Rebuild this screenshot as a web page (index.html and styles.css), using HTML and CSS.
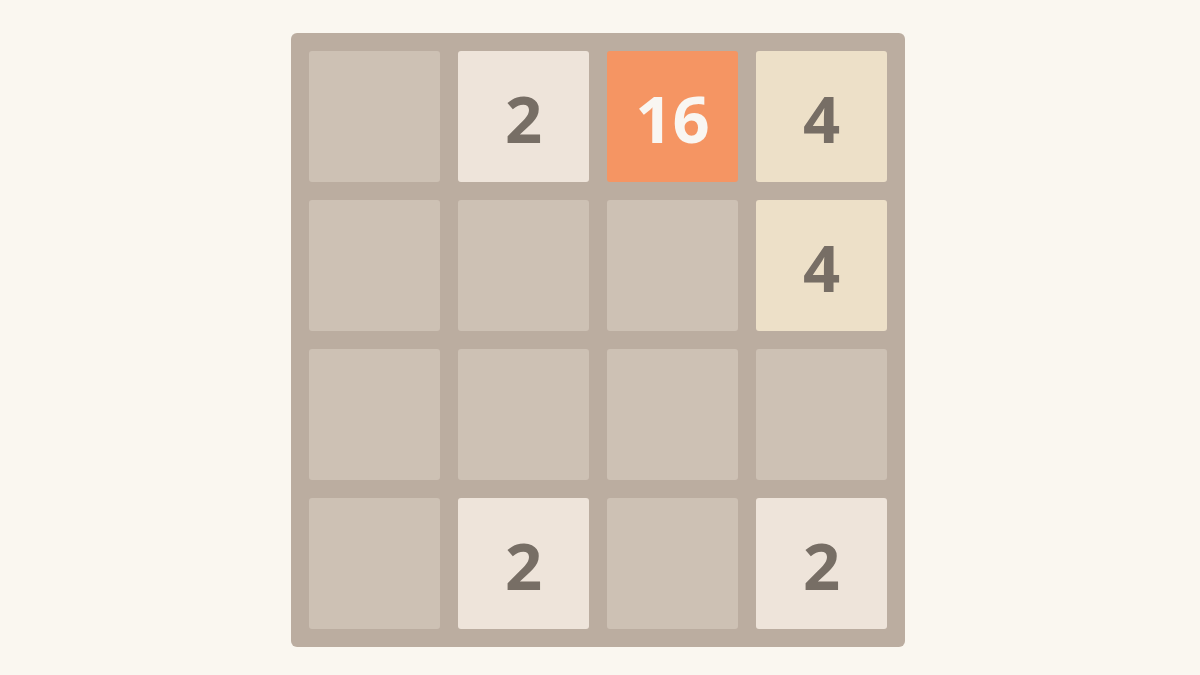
FILE: index.html
```html
<!DOCTYPE html>
<html lang="en">
<head>
    <meta charset="UTF-8">
    <meta name="viewport" content="width=device-width, initial-scale=1.0">
    <title>2048</title>
    <link rel="stylesheet" href="styles.css">
</head>
<body>
    <div class="board">
        <div class="tile"></div>
        <div class="tile tile-2">2</div>
        <div class="tile tile-16">16</div>
        <div class="tile tile-4">4</div>

        <div class="tile"></div>
        <div class="tile"></div>
        <div class="tile"></div>
        <div class="tile tile-4">4</div>

        <div class="tile"></div>
        <div class="tile"></div>
        <div class="tile"></div>
        <div class="tile"></div>

        <div class="tile"></div>
        <div class="tile tile-2">2</div>
        <div class="tile"></div>
        <div class="tile tile-2">2</div>
    </div>
</body>
</html>
```

FILE: styles.css
```css
/* 2048 board */
body {
    margin: 0;
    padding: 33px 4px 0 0;
    background-color: #faf7f0;
    font-family: "Open Sans", "DejaVu Sans", sans-serif;
    display: flex;
    justify-content: center;
}

.board {
    display: grid;
    grid-template-columns: repeat(4, 131px);
    grid-template-rows: repeat(4, 131px);
    gap: 18px;
    padding: 18px;
    background-color: #bbada0;
    border-radius: 6px;
}

.tile {
    background-color: #cdc1b4;
    border-radius: 3px;
    display: flex;
    align-items: center;
    justify-content: center;
    padding-top: 4px;
    font-size: 65px;
    font-weight: 700;
    line-height: 1;
    color: #776e65;
}

.tile-2 {
    background-color: #eee4da;
}

.tile-4 {
    background-color: #ede0c8;
}

.tile-16 {
    background-color: #f59563;
    color: #f9f6f2;
}
```
